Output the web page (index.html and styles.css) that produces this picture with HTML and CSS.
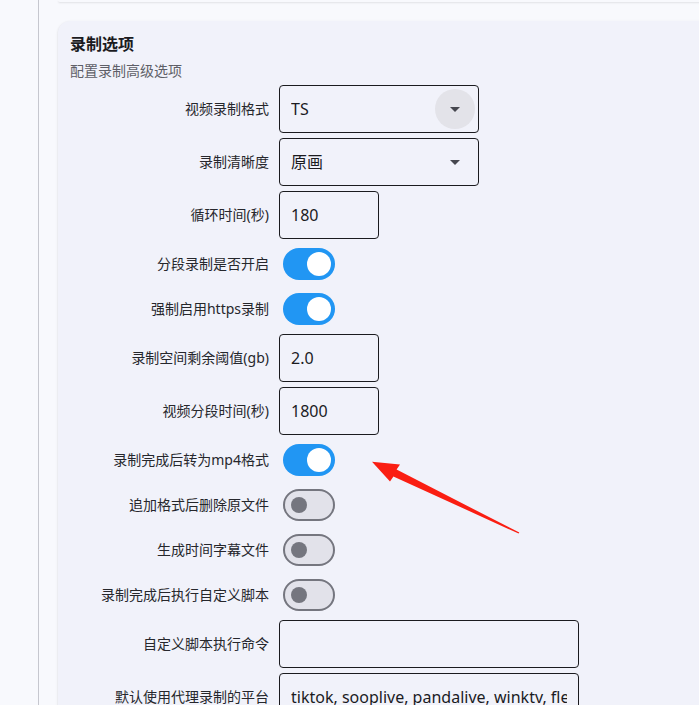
FILE: index.html
```html
<!DOCTYPE html>
<html lang="zh-CN">
<head>
<meta charset="utf-8">
<title>录制选项</title>
<link rel="stylesheet" href="styles.css">
</head>
<body>
<div class="app">
  <nav class="rail"></nav>
  <main class="content">
    <div class="prev-card"></div>
    <section class="card">
      <h2 class="card-title">录制选项</h2>
      <p class="card-subtitle">配置录制高级选项</p>
      <div class="form">
        <div class="row">
          <div class="label">视频录制格式</div>
          <div class="field w200 dropdown">
            <div class="value">TS</div>
            <span class="drop-btn hovered"><svg viewBox="0 0 24 24" width="24" height="24"><path d="M7 10l5 5 5-5z"/></svg></span>
          </div>
        </div>
        <div class="row">
          <div class="label">录制清晰度</div>
          <div class="field w200 dropdown">
            <div class="value">原画</div>
            <span class="drop-btn"><svg viewBox="0 0 24 24" width="24" height="24"><path d="M7 10l5 5 5-5z"/></svg></span>
          </div>
        </div>
        <div class="row">
          <div class="label">循环时间(秒)</div>
          <div class="field w100"><div class="value">180</div></div>
        </div>
        <div class="row toggle-row">
          <div class="label">分段录制是否开启</div>
          <div class="switch on"><span class="thumb"></span></div>
        </div>
        <div class="row toggle-row">
          <div class="label">强制启用https录制</div>
          <div class="switch on"><span class="thumb"></span></div>
        </div>
        <div class="row">
          <div class="label">录制空间剩余阈值(gb)</div>
          <div class="field w100"><div class="value">2.0</div></div>
        </div>
        <div class="row">
          <div class="label">视频分段时间(秒)</div>
          <div class="field w100"><div class="value">1800</div></div>
        </div>
        <div class="row toggle-row">
          <div class="label">录制完成后转为mp4格式</div>
          <div class="switch on"><span class="thumb"></span></div>
        </div>
        <div class="row toggle-row">
          <div class="label">追加格式后删除原文件</div>
          <div class="switch off"><span class="thumb"></span></div>
        </div>
        <div class="row toggle-row">
          <div class="label">生成时间字幕文件</div>
          <div class="switch off"><span class="thumb"></span></div>
        </div>
        <div class="row toggle-row">
          <div class="label">录制完成后执行自定义脚本</div>
          <div class="switch off"><span class="thumb"></span></div>
        </div>
        <div class="row">
          <div class="label">自定义脚本执行命令</div>
          <div class="field w300"><div class="value"></div></div>
        </div>
        <div class="row">
          <div class="label">默认使用代理录制的平台</div>
          <div class="field w300"><div class="value">tiktok, sooplive, pandalive, winktv, flextv, popkontv, twitch, liveme</div></div>
        </div>
      </div>
    </section>
  </main>
</div>
<svg class="annotation" width="699" height="705" viewBox="0 0 699 705">
  <polygon points="372,461.7 400,464.6 396.6,469.6 519.3,532.6 518.6,533.6 393.4,476.4 390,481.4" fill="#fa1e12"/>
</svg>
</body>
</html>
```

FILE: styles.css
```css
html, body {
  margin: 0;
  padding: 0;
}

body {
  background: #f8f9fd;
  font-family: "Noto Sans", "Noto Sans CJK SC", sans-serif;
  color: #1b1b1f;
  width: 699px;
  height: 705px;
  overflow: hidden;
  position: relative;
}

.app {
  display: flex;
  height: 705px;
}

.rail {
  flex: none;
  width: 38px;
  border-right: 1px solid #c6c7cf;
}

.content {
  flex: 1;
  min-width: 0;
  padding-left: 19px;
  display: flex;
  flex-direction: column;
}

.prev-card {
  flex: none;
  height: 2px;
  width: 680px;
  border-radius: 0 0 12px 12px;
  background: #f8f9fd;
  box-shadow: 0 1px 2px rgba(0, 0, 0, 0.10);
  margin-bottom: 19px;
}

.card {
  flex: none;
  width: 680px;
  padding: 11px 12px;
  border-radius: 12px;
  background: #f1f2fa;
  box-shadow: 0 1px 3px rgba(0, 0, 0, 0.10), 0 1px 2px rgba(0, 0, 0, 0.05);
}

.card-title {
  margin: 0;
  font-size: 16px;
  line-height: 24px;
  font-weight: 700;
  color: #1b1b1f;
}

.card-subtitle {
  margin: 5px 0 0;
  font-size: 14px;
  line-height: 20px;
  color: #5e5f67;
}

.form {
  margin-top: 4px;
  display: flex;
  flex-direction: column;
  gap: 5px;
}

.row {
  display: flex;
  align-items: center;
  gap: 10px;
  height: 48px;
}

.toggle-row {
  height: 40px;
}

.label {
  flex: none;
  width: 199px;
  text-align: right;
  font-size: 14px;
  line-height: 20px;
  color: #26272c;
  white-space: nowrap;
}

.field {
  flex: none;
  box-sizing: border-box;
  height: 48px;
  border: 1px solid #1b1b1f;
  border-radius: 4px;
  padding: 0 11px;
  display: flex;
  align-items: center;
}

.w100 { width: 100px; }
.w200 { width: 200px; }
.w300 { width: 300px; }

.value {
  flex: 1;
  min-width: 0;
  overflow: hidden;
  white-space: nowrap;
  font-size: 16px;
  line-height: 24px;
  color: #1b1b1f;
}

.dropdown {
  padding-right: 3px;
}

.drop-btn {
  flex: none;
  width: 40px;
  height: 40px;
  border-radius: 50%;
  display: flex;
  align-items: center;
  justify-content: center;
}

.drop-btn svg {
  fill: #46474f;
}

.drop-btn.hovered {
  background: #e3e3e9;
}

.switch {
  flex: none;
  box-sizing: border-box;
  width: 52px;
  height: 32px;
  margin-left: 4px;
  border-radius: 16px;
  display: flex;
  align-items: center;
}

.switch .thumb {
  display: block;
  border-radius: 50%;
}

.switch.on {
  background: #2196f3;
}

.switch.on .thumb {
  width: 24px;
  height: 24px;
  background: #ffffff;
  margin-left: auto;
  margin-right: 4px;
}

.switch.off {
  background: #e2e2ea;
  border: 2px solid #75767f;
}

.switch.off .thumb {
  width: 16px;
  height: 16px;
  background: #75767f;
  margin-left: 6px;
}

.annotation {
  position: absolute;
  left: 0;
  top: 0;
  pointer-events: none;
}
```
